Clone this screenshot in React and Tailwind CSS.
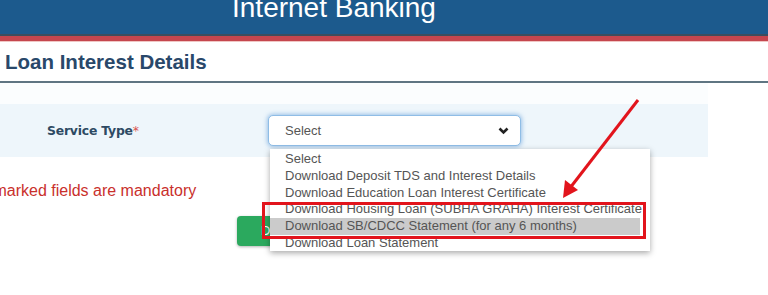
import React from 'react';

const options = [
  'Select',
  'Download Deposit TDS and Interest Details',
  'Download Education Loan Interest Certificate',
  'Download Housing Loan (SUBHA GRAHA) Interest Certificate',
  'Download SB/CDCC Statement (for any 6 months)',
  'Download Loan Statement',
];

export default function App() {
  return (
    <div className="w-[768px] h-[295px] overflow-hidden bg-white relative font-['Liberation_Sans',Arial,sans-serif]">
      {/* header */}
      <div className="h-[34px] bg-[#1c5a8d] overflow-hidden pl-[232px]">
        <div className="-mt-[6px] text-[28px] leading-[28px] text-white">Internet Banking</div>
      </div>
      <div className="h-[2px] bg-[#3c4d5e]" />
      <div className="h-[5px] bg-[#c5464e]" />
      <div className="h-[1px] bg-[#f0c6c4]" />

      {/* page title */}
      <div className="h-[41px] flex items-center px-[5px] border-b-2 border-[#5f7582]">
        <h1 className="text-[20.5px] font-bold text-[#29486a] mt-[1px]">Loan Interest Details</h1>
      </div>

      <div className="w-[708px] h-[21px] bg-[#fbfdfe]" />

      {/* form row */}
      <div className="w-[708px] h-[53px] bg-[#eef6fb] flex items-center">
        <label className="ml-[47px] w-[221px] text-[12.4px] font-bold text-[#2d4a63] font-['DejaVu_Sans',Verdana,sans-serif] tracking-[-0.2px] mt-[1px]">
          Service Type<span className="text-[#d9534f] font-normal">*</span>
        </label>
        <div className="relative">
          <div className="w-[253px] h-[31px] rounded-[5px] border border-[#8fbde6] bg-white shadow-[0_0_4px_1px_rgba(102,160,220,0.6)] flex items-center justify-between pl-[16px] pr-[11px] pt-[1px]">
            <span className="text-[13px] text-[#555]">Select</span>
            <svg width="11" height="8" viewBox="0 0 11 8">
              <path d="M1.5 1.5 L5.5 5.5 L9.5 1.5" fill="none" stroke="#222" strokeWidth="2.6" />
            </svg>
          </div>
          {/* open list */}
          <ul className="absolute left-[2px] top-[34px] w-[380px] h-[102px] overflow-hidden bg-white shadow-[0_2px_6px_rgba(0,0,0,0.35)] z-10 pt-[2px]">
            {options.map((o, i) => (
              <li
                key={o}
                className={`h-[16.8px] leading-[16.8px] pl-[15px] text-[13px] whitespace-nowrap text-[#555] ${i === 4 ? 'bg-[#cbcbcb] text-[#333] mr-[10px]' : ''}`}
              >
                {o}
              </li>
            ))}
          </ul>
        </div>
      </div>

      {/* below form */}
      <div className="mt-[25px] -ml-[35px] text-[16px] leading-[18px] text-[#c9302c] whitespace-nowrap">
        *All marked fields are mandatory
      </div>
      <div className="mt-[16px] ml-[237px]">
        <button className="w-[120px] h-[30px] rounded-[4px] bg-[#2ba95e] text-white text-[13px] pl-[24px] text-left shadow-[0_1px_3px_rgba(0,0,0,0.3)]">
          Download
        </button>
      </div>

      {/* annotation */}
      <div className="absolute left-[262px] top-[202px] w-[384px] h-[37px] border-[3.5px] border-[#e2141c] z-20 pointer-events-none" />
      <svg className="absolute left-0 top-0 z-20 pointer-events-none" width="768" height="295">
        <line x1="638" y1="100" x2="570" y2="188" stroke="#e2141c" strokeWidth="3" />
        <polygon points="563,198 565,180 578,190" fill="#e2141c" />
      </svg>
    </div>
  );
}
